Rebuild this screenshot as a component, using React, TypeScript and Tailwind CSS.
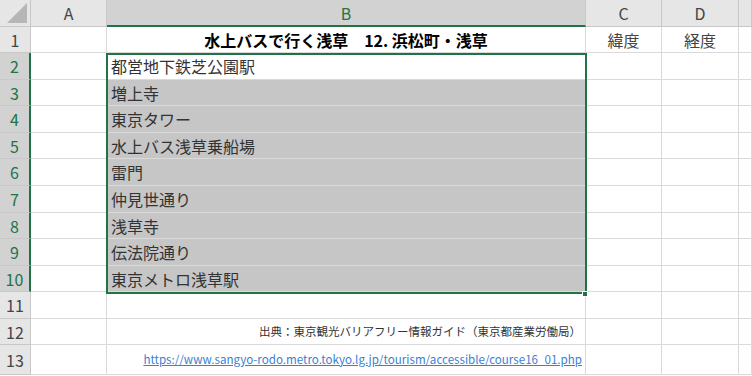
const cols = [
  { key: 'A', w: 76 },
  { key: 'B', w: 479 },
  { key: 'C', w: 76 },
  { key: 'D', w: 77 },
  { key: 'E', w: 13 },
];

const rowHeights = [27, 26, 27, 26, 27, 26, 27, 27, 26, 27, 26, 27, 26, 30];

const places = [
  '都営地下鉄芝公園駅',
  '増上寺',
  '東京タワー',
  '水上バス浅草乗船場',
  '雷門',
  '仲見世通り',
  '浅草寺',
  '伝法院通り',
  '東京メトロ浅草駅',
];

const font = { fontFamily: '"Noto Sans CJK JP", "Noto Sans", sans-serif' };

function Corner() {
  return (
    <div className="relative h-[27px] w-[31px] border-r border-b border-[#c8c8c8] bg-[#e6e6e6]">
      <svg className="absolute right-[3px] bottom-[3px]" width="20" height="20" viewBox="0 0 20 20">
        <polygon points="20,0 20,20 0,20" fill="#b6b6b6" />
      </svg>
    </div>
  );
}

function ColHeader({ label, w }: { label: string; w: number }) {
  const active = label === 'B';
  return (
    <div
      style={{ width: w }}
      className={
        'flex h-[27px] items-center justify-center border-r border-[#c8c8c8] text-[16px] ' +
        (active
          ? 'border-b-2 border-b-[#217346] bg-[#d2d2d2] text-[#217346]'
          : 'border-b border-b-[#c8c8c8] bg-[#e6e6e6] text-[#444]')
      }
    >
      {label === 'E' ? '' : label}
    </div>
  );
}

function cellText(row: number, col: string) {
  if (col === 'B') {
    if (row === 1)
      return (
        <div className="w-full text-center text-[16px] font-bold text-black">
          水上バスで行く浅草　12. 浜松町・浅草
        </div>
      );
    if (row >= 2 && row <= 10) return <div className="pl-[4px] text-[16px] text-[#333]">{places[row - 2]}</div>;
    if (row === 12)
      return (
        <div className="w-full pr-[4px] text-right text-[11.5px] text-[#333]">
          出典：東京観光バリアフリー情報ガイド（東京都産業労働局）
        </div>
      );
    if (row === 13)
      return (
        <div className="w-full pr-[3px] text-right text-[11.6px] text-[#3b7fd1] underline">
          https://www.sangyo-rodo.metro.tokyo.lg.jp/tourism/accessible/course16_01.php
        </div>
      );
  }
  if (row === 1 && col === 'C') return <div className="w-full text-center text-[16px] text-[#444]">緯度</div>;
  if (row === 1 && col === 'D') return <div className="w-full text-center text-[16px] text-[#444]">経度</div>;
  return null;
}

export default function App() {
  return (
    <div className="relative h-[376px] w-[752px] overflow-hidden bg-white" style={font}>
      <div className="flex">
        <Corner />
        {cols.map((c) => (
          <ColHeader key={c.key} label={c.key} w={c.w} />
        ))}
      </div>
      {rowHeights.slice(1).map((h, i) => {
        const row = i + 1;
        const sel = row >= 2 && row <= 10;
        return (
          <div key={row} className="flex" style={{ height: h }}>
            <div
              className={
                'flex w-[31px] items-center justify-center border-b border-[#c8c8c8] text-[16px] ' +
                (sel
                  ? 'border-r-2 border-r-[#217346] bg-[#d2d2d2] text-[#217346]'
                  : 'border-r border-r-[#c8c8c8] bg-[#e6e6e6] text-[#444]')
              }
            >
              {row <= 13 ? row : ''}
            </div>
            {cols.map((c) => {
              const fill = c.key === 'B' && row >= 3 && row <= 10;
              return (
                <div
                  key={c.key}
                  style={{ width: c.w }}
                  className={
                    'flex items-center overflow-visible whitespace-nowrap border-r border-b border-[#dadada] ' +
                    (fill ? 'bg-[#c6c6c6]' : 'bg-white')
                  }
                >
                  {cellText(row, c.key)}
                </div>
              );
            })}
          </div>
        );
      })}
      {/* selection B2:B10 */}
      <div className="pointer-events-none absolute left-[106px] top-[53px] h-[241px] w-[481px] border-2 border-[#217346]" />
      <div className="absolute left-[582px] top-[291px] h-[6px] w-[6px] border border-white bg-[#217346]" />
    </div>
  );
}
